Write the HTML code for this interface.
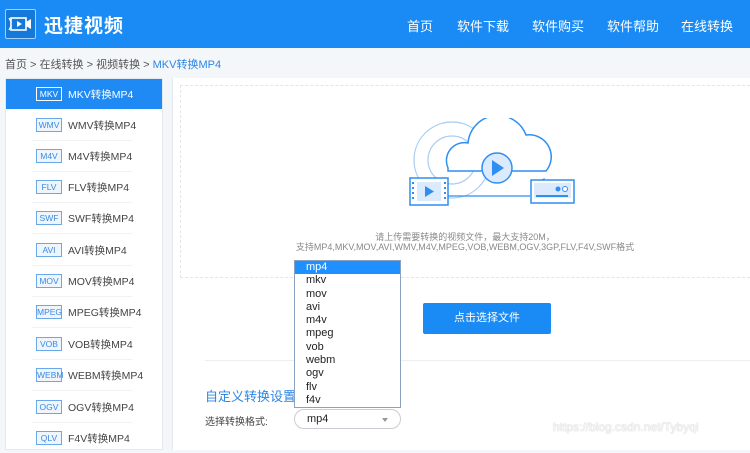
<!DOCTYPE html>
<html><head><meta charset="utf-8">
<style>
*{margin:0;padding:0;box-sizing:border-box}
body{width:750px;height:450px;overflow:hidden;background:#f4f7fa;font-family:"Liberation Sans","Noto Sans CJK SC",sans-serif;position:relative}
.hd{position:absolute;left:0;top:0;width:750px;height:48px;background:#1a8bf5}
.logo{position:absolute;left:5px;top:9px;width:31px;height:30px;border:1px solid #9fd0ff;border-radius:2px;background:#1479d8}
.brand{position:absolute;left:44px;top:11px;color:#fff;font-size:19px;font-weight:bold;letter-spacing:1px}
.nav{position:absolute;top:16px;color:#fff;font-size:13px}
.bc{position:absolute;left:5px;top:56px;font-size:11px;color:#555}
.bc b{font-weight:normal;color:#2b86e6}
.side{position:absolute;left:5px;top:78px;width:158px;height:372px;background:#fff;border:1px solid #e3e8ee}
.it{position:absolute;left:0;width:156px;height:30px;font-size:10.5px;color:#444}
.it .bd{position:absolute;left:30px;top:8px;width:26px;height:14px;border:1px solid #6aa8ea;color:#3b8ae0;background:#eef5fd;font-size:8.5px;text-align:center;line-height:12px}
.it .t{position:absolute;left:62px;top:8px}
.it.on{background:#1f8af3;color:#fff}
.it.on .bd{border-color:#fff;background:#1f8af3;color:#fff}
.it.sep:after{content:"";position:absolute;left:26px;right:30px;bottom:-1px;border-bottom:1px solid #f0f2f5}
.main{position:absolute;left:172px;top:78px;width:578px;height:372px;background:#fff;border-left:1px solid #e3e8ee}
.up{position:absolute;left:180px;top:85px;width:575px;height:193px;border:1px dashed #e2e6ea}
.tip{position:absolute;left:180px;width:570px;text-align:center;font-size:9px;color:#888}
.btn{position:absolute;left:423px;top:303px;width:128px;height:31px;background:#1a8bf5;color:#fff;font-size:11px;text-align:center;line-height:31px;border-radius:2px}
.line{position:absolute;left:205px;top:360px;width:545px;border-top:1px solid #eceff2}
.cus{position:absolute;left:205px;top:386px;color:#2b86e6;font-size:13px}
.lab{position:absolute;left:205px;top:413px;color:#444;font-size:10px}
.sel{position:absolute;left:294px;top:409px;width:107px;height:20px;border:1px solid #c9cdd2;border-radius:10px;font-size:11px;color:#222;padding-left:12px;line-height:18px}
.sel:after{content:"";position:absolute;right:12px;top:8px;border:3px solid transparent;border-top:4px solid #999}
.dd{position:absolute;left:294px;top:260px;width:107px;height:148px;background:#fff;border:1px solid #8aa2c0;font-size:11px;color:#222}
.dd div{height:13.3px;line-height:13px;padding-left:11px}
.dd .s{background:#1e90ff;color:#fff}
.wm{position:absolute;left:553px;top:420px;font-size:12px;color:rgba(255,255,255,.85);text-shadow:0 0 1px #aaa}
</style></head><body>
<div class="hd">
<div class="logo"><svg width="29" height="28" viewBox="0 0 29 28"><rect x="5" y="8" width="15" height="12" fill="none" stroke="#fff" stroke-width="1.6"/><path d="M11 11v6l5-3z" fill="#fff"/><path d="M20 12l5-3v10l-5-3z" fill="#fff"/><path d="M3 8l2 4M3 20l2-4" stroke="#fff" stroke-width="1.2"/></svg></div>
<div class="brand">迅捷视频</div>
<div class="nav" style="left:407px">首页</div>
<div class="nav" style="left:457px">软件下载</div>
<div class="nav" style="left:532px">软件购买</div>
<div class="nav" style="left:607px">软件帮助</div>
<div class="nav" style="left:681px">在线转换</div>
</div>
<div class="bc">首页 &gt; 在线转换 &gt; 视频转换 &gt; <b>MKV转换MP4</b></div>
<div class="side">
<div class="it on" style="top:0"><span class="bd">MKV</span><span class="t">MKV转换MP4</span></div>
<div class="it sep" style="top:31px"><span class="bd">WMV</span><span class="t">WMV转换MP4</span></div>
<div class="it sep" style="top:62px"><span class="bd">M4V</span><span class="t">M4V转换MP4</span></div>
<div class="it sep" style="top:93px"><span class="bd">FLV</span><span class="t">FLV转换MP4</span></div>
<div class="it sep" style="top:124px"><span class="bd">SWF</span><span class="t">SWF转换MP4</span></div>
<div class="it sep" style="top:156px"><span class="bd">AVI</span><span class="t">AVI转换MP4</span></div>
<div class="it sep" style="top:187px"><span class="bd">MOV</span><span class="t">MOV转换MP4</span></div>
<div class="it sep" style="top:218px"><span class="bd">MPEG</span><span class="t">MPEG转换MP4</span></div>
<div class="it sep" style="top:250px"><span class="bd">VOB</span><span class="t">VOB转换MP4</span></div>
<div class="it sep" style="top:281px"><span class="bd">WEBM</span><span class="t">WEBM转换MP4</span></div>
<div class="it sep" style="top:313px"><span class="bd">OGV</span><span class="t">OGV转换MP4</span></div>
<div class="it" style="top:344px"><span class="bd">QLV</span><span class="t">F4V转换MP4</span></div>
</div>
<div class="main"></div>
<div class="up"></div>
<svg style="position:absolute;left:400px;top:118px" width="180" height="90" viewBox="0 0 180 90">
<circle cx="52" cy="42" r="38" fill="none" stroke="#a9cdf3" stroke-width="1.2"/>
<circle cx="52" cy="42" r="24" fill="none" stroke="#a9cdf3" stroke-width="1.2"/>
<path d="M48 50a18 18 0 0 1 20-25a30 30 0 0 1 58-8a22 22 0 0 1 20 36h-98z" fill="#fff" stroke="#2f8ef0" stroke-width="1.5"/>
<circle cx="97" cy="50" r="15" fill="#dbeafd" stroke="#2f8ef0" stroke-width="1.5"/>
<path d="M92 42v16l12-8z" fill="#2f8ef0"/>
<rect x="10" y="60" width="38" height="27" fill="#fff" stroke="#2f8ef0" stroke-width="1.5"/>
<rect x="17" y="64" width="24" height="19" fill="#dbeafd"/>
<path d="M25 68v11l9-5.5z" fill="#2f8ef0"/>
<path d="M13 64v19M45 64v19" stroke="#2f8ef0" stroke-width="2" stroke-dasharray="2 3"/>
<path d="M48 78h82" stroke="#2f8ef0" stroke-width="1.3"/>
<path d="M132 67l12 6v-12l-12 6v12" fill="#fff" stroke="#2f8ef0" stroke-width="1.3"/>
<rect x="143" y="70" width="43" height="23" fill="#fff" stroke="#2f8ef0" stroke-width="1.5" transform="translate(-12,-8)"/>
<rect x="134" y="65" width="37" height="15" fill="#dbeafd"/>
<circle cx="158" cy="71" r="2.5" fill="#2f8ef0"/><circle cx="165" cy="71" r="2.5" fill="#fff" stroke="#2f8ef0"/>
<path d="M136 78h32" stroke="#2f8ef0" stroke-width="2"/>
</svg>
<div class="tip" style="top:230px">请上传需要转换的视频文件，最大支持20M，</div>
<div class="tip" style="top:240px">支持MP4,MKV,MOV,AVI,WMV,M4V,MPEG,VOB,WEBM,OGV,3GP,FLV,F4V,SWF格式</div>
<div class="btn">点击选择文件</div>
<div class="line"></div>
<div class="cus">自定义转换设置</div>
<div class="lab">选择转换格式:</div>
<div class="sel">mp4</div>
<div class="dd"><div class="s">mp4</div><div>mkv</div><div>mov</div><div>avi</div><div>m4v</div><div>mpeg</div><div>vob</div><div>webm</div><div>ogv</div><div>flv</div><div>f4v</div></div>
<div class="wm">https://blog.csdn.net/Tybyqi</div>
</body></html>
